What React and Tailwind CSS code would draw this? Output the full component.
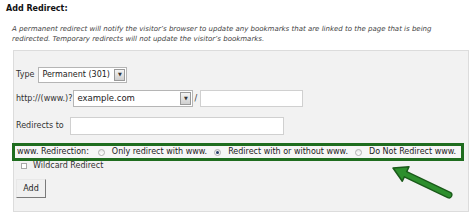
import React from "react";

function FakeSelect({ value, className, textClass }) {
  return (
    <div className={`flex items-stretch bg-white border border-[#b5b5b5] ${className}`}>
      <span className={`flex-1 flex items-center pl-[3px] text-[#222] ${textClass}`}>{value}</span>
      <span className="w-[11px] m-[1px] flex items-center justify-center bg-gradient-to-b from-[#f4f4f4] to-[#cfcfcf] border border-[#9a9a9a] text-[5px] text-[#333]">▼</span>
    </div>
  );
}

function Radio({ checked }) {
  return (
    <span className="inline-flex w-[7px] h-[7px] rounded-full border border-[#b0b0b0] bg-gradient-to-b from-[#e6e6e6] to-white items-center justify-center">
      {checked && <span className="w-[3px] h-[3px] rounded-full bg-[#2a3f6a]" />}
    </span>
  );
}

export default function App() {
  return (
    <div className="relative w-[474px] h-[218px] bg-white overflow-hidden font-['DejaVu_Sans',Verdana,sans-serif] text-[#333]">
      <div className="pl-[6px] pt-[4px] text-[8px] font-bold leading-[10px] text-[#111]">Add Redirect:</div>

      <p className="pl-[12px] pt-[10px] pr-[4px] text-[7px] italic leading-[10px] text-[#444]">
        A permanent redirect will notify the visitor’s browser to update any bookmarks that are linked to the page that is being
        <br />
        redirected. Temporary redirects will not update the visitor’s bookmarks.
      </p>

      {/* form panel */}
      <div className="ml-[13px] mt-[6px] w-[456px] h-[162px] bg-[#f2f2f2] border border-[#dcdcdc] pt-[16px]">
        <div className="flex items-center h-[16px] pl-[2px] text-[8px]">
          <span>Type</span>
          <FakeSelect value="Permanent (301)" className="ml-[4px] w-[89px] h-[16px]" textClass="text-[8px]" />
        </div>

        <div className="flex items-center h-[17px] mt-[7px] pl-[2px] text-[8px]">
          <span>http://(www.)?</span>
          <FakeSelect value="example.com" className="ml-[1px] w-[120px] h-[17px]" textClass="text-[8.5px]" />
          <span className="ml-[1px] w-[6px]">/</span>
          <div className="w-[103px] h-[17px] bg-white border border-[#d0d0d0]" />
        </div>

        <div className="flex items-center h-[18px] mt-[10px] pl-[2px] text-[8px]">
          <span>Redirects to</span>
          <div className="ml-[6px] w-[214px] h-[18px] bg-white border border-[#d0d0d0]" />
        </div>

        {/* highlighted www redirection row */}
        <div className="-ml-[2px] mt-[8px] w-[452px] h-[18px] border-[3px] border-[#1f6d1f] bg-[#f6f6f6] flex items-center pl-[2px] text-[8px] text-[#222] whitespace-nowrap">
          <span>www. Redirection:</span>
          <span className="ml-[9px] flex items-center"><Radio /></span>
          <span className="ml-[7px]">Only redirect with www.</span>
          <span className="ml-[7px] flex items-center"><Radio checked /></span>
          <span className="ml-[7px]">Redirect with or without www.</span>
          <span className="ml-[7px] flex items-center"><Radio /></span>
          <span className="ml-[7px]">Do Not Redirect www.</span>
        </div>

        <div className="flex items-center h-[10px] pl-[7px] text-[8px]">
          <span className="w-[6px] h-[6px] border border-[#a8a8a8] bg-white" />
          <span className="ml-[6px]">Wildcard Redirect</span>
        </div>

        <button className="ml-[2px] mt-[8px] w-[30px] h-[19px] bg-[#f0f0f0] border border-t-[#e8e8e8] border-l-[#e8e8e8] border-r-[#7a7a7a] border-b-[#7a7a7a] text-[8px] text-[#222] flex items-center justify-center">
          Add
        </button>
      </div>

      {/* annotation arrow */}
      <svg className="absolute left-0 top-0" width="474" height="218" viewBox="0 0 474 218">
        <line x1="405" y1="174" x2="449" y2="195" stroke="#1a5a1a" strokeWidth="7" strokeLinecap="round" />
        <polygon points="393,168 409,166.8 402.3,181.2" fill="#2d8f2d" stroke="#1a5a1a" strokeWidth="1.5" strokeLinejoin="round" />
        <line x1="404" y1="173.5" x2="449" y2="195" stroke="#2d8f2d" strokeWidth="4.5" strokeLinecap="round" />
      </svg>
    </div>
  );
}
